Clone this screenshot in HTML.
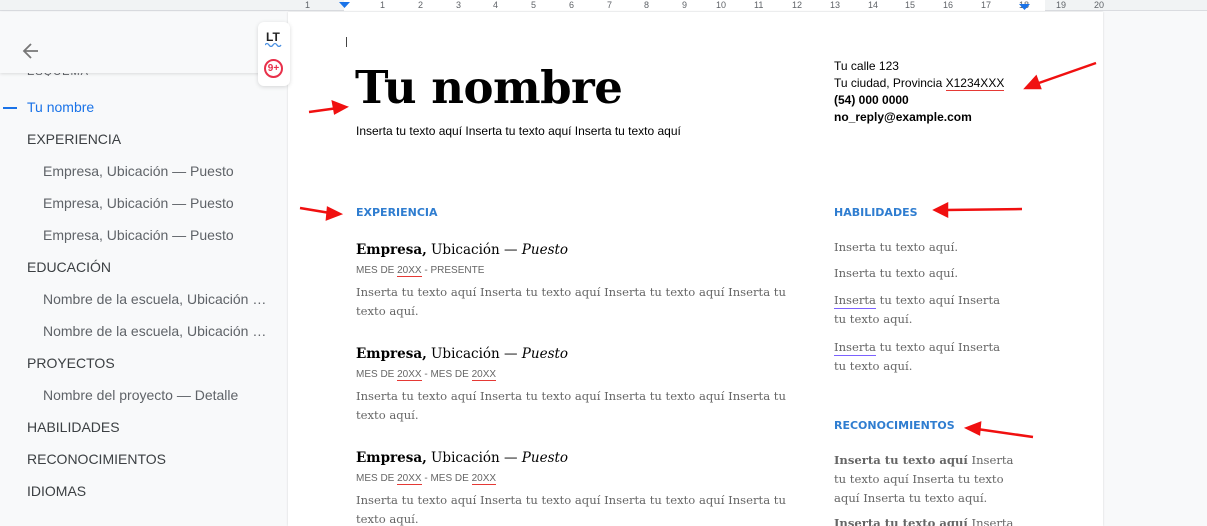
<!DOCTYPE html>
<html><head><meta charset="utf-8"><style>
*{margin:0;padding:0;box-sizing:border-box}
html,body{width:1207px;height:526px;overflow:hidden}
body{background:#f8f9fa;font-family:"Liberation Sans",sans-serif;position:relative}
.a{position:absolute;white-space:nowrap}
.ruler{position:absolute;left:0;top:0;width:1207px;height:11px;background:#f1f3f4;border-bottom:1px solid #dadce0}
.rw{position:absolute;left:344px;top:0;width:701px;height:11px;background:#fff}
.rn{position:absolute;top:0;font-size:9px;color:#5f6368;line-height:11px}
.side{position:absolute;left:0;top:12px;width:288px;height:514px;background:#f8f9fa}
.ol{position:absolute;font-size:14px;color:#3c4043}
.ol2{position:absolute;font-size:14px;color:#5f6368}
.page{position:absolute;left:288px;top:12px;width:815px;height:514px;background:#fff;box-shadow:0 0 2px rgba(0,0,0,.15)}
.serif{font-family:"DejaVu Serif","Liberation Serif",serif}
.h{color:#2f7dd0;font-weight:bold;font-size:11px;font-family:"DejaVu Sans","Liberation Sans",sans-serif}
.job{font-size:13.5px;color:#000}
.date{font-size:10px;color:#666}
.txt{font-size:11.6px;color:#666;line-height:19px;white-space:normal}
.u{display:inline-block;border-bottom:1.5px solid #e53935;line-height:1.1}
.up{display:inline-block;border-bottom:1.5px solid #7b61ff;line-height:1.3}
</style></head><body>
<div class="ruler"><div class="rw"></div>
<span class="rn" style="left:305px">1</span>
<span class="rn" style="left:380px">1</span><span class="rn" style="left:418px">2</span><span class="rn" style="left:456px">3</span><span class="rn" style="left:493px">4</span><span class="rn" style="left:531px">5</span><span class="rn" style="left:569px">6</span><span class="rn" style="left:607px">7</span><span class="rn" style="left:644px">8</span><span class="rn" style="left:682px">9</span><span class="rn" style="left:716px">10</span><span class="rn" style="left:754px">11</span><span class="rn" style="left:792px">12</span><span class="rn" style="left:830px">13</span><span class="rn" style="left:868px">14</span><span class="rn" style="left:905px">15</span><span class="rn" style="left:943px">16</span><span class="rn" style="left:981px">17</span><span class="rn" style="left:1019px">18</span><span class="rn" style="left:1056px">19</span><span class="rn" style="left:1094px">20</span>
<div class="a" style="left:339px;top:2px;width:11px;height:6px;background:#1a73e8;clip-path:polygon(0 0,100% 0,50% 100%)"></div>
<div class="a" style="left:1019px;top:4px;width:11px;height:6px;background:#1a73e8;clip-path:polygon(0 0,100% 0,50% 100%)"></div>
</div>
<div class="side">
<div class="a" style="left:27px;top:54px;font-size:11px;color:#5f6368;letter-spacing:1px;height:10px;overflow:hidden">ESQUEMA</div>
<div class="a" style="left:0;top:0;width:288px;height:61px;background:#f8f9fa;box-shadow:0 1px 3px rgba(0,0,0,.12)"></div>
<svg class="a" style="left:22px;top:30px" width="18" height="18" viewBox="0 0 18 18"><path d="M16 9H3M9 2L2 9l7 7" stroke="#777" stroke-width="1.8" fill="none"/></svg>
<div class="a" style="left:3px;top:95px;width:14px;height:2px;background:#1a73e8"></div>
<div class="ol" style="left:27px;top:87px;color:#1a73e8">Tu nombre</div>
<div class="ol" style="left:27px;top:119px">EXPERIENCIA</div>
<div class="ol2" style="left:43px;top:151px">Empresa, Ubicación — Puesto</div>
<div class="ol2" style="left:43px;top:183px">Empresa, Ubicación — Puesto</div>
<div class="ol2" style="left:43px;top:215px">Empresa, Ubicación — Puesto</div>
<div class="ol" style="left:27px;top:247px">EDUCACIÓN</div>
<div class="ol2" style="left:43px;top:279px">Nombre de la escuela, Ubicación …</div>
<div class="ol2" style="left:43px;top:311px">Nombre de la escuela, Ubicación …</div>
<div class="ol" style="left:27px;top:343px">PROYECTOS</div>
<div class="ol2" style="left:43px;top:375px">Nombre del proyecto — Detalle</div>
<div class="ol" style="left:27px;top:407px">HABILIDADES</div>
<div class="ol" style="left:27px;top:439px">RECONOCIMIENTOS</div>
<div class="ol" style="left:27px;top:471px">IDIOMAS</div>
</div>
<div class="page"></div>
<div class="a" style="left:258px;top:22px;width:32px;height:64px;background:#fff;border-radius:6px;box-shadow:0 1px 4px rgba(0,0,0,.15)"></div>
<div class="a" style="left:266px;top:30px;font-size:12px;font-weight:bold;color:#222">LT</div>
<svg class="a" style="left:265px;top:42px" width="18" height="5"><path d="M0 3q2-3 4 0t4 0 4 0 4 0" stroke="#4a90e2" stroke-width="1.3" fill="none"/></svg>
<div class="a" style="left:264px;top:59px;width:19px;height:19px;border:2px solid #e8304a;border-radius:50%;font-size:10px;font-weight:bold;color:#e8304a;text-align:center;line-height:15px">9+</div>
<div class="a" style="left:346px;top:37px;width:1px;height:10px;background:#444"></div>
<div class="a serif" style="left:355px;top:58px;font-size:45px;font-weight:bold;color:#000;line-height:60px;letter-spacing:-0.5px">Tu nombre</div>
<div class="a" style="left:356px;top:124px;font-size:12px;color:#000">Inserta tu texto aquí Inserta tu texto aquí Inserta tu texto aquí</div>
<div class="a" style="left:834px;top:58px;font-size:12px;color:#000;line-height:17px">Tu calle 123<br>Tu ciudad, Provincia <span class="u">X1234XXX</span><br><b>(54) 000 0000</b><br><b>no_reply@example.com</b></div>
<div class="a h" style="left:356px;top:206px">EXPERIENCIA</div>
<div class="a h" style="left:834px;top:206px">HABILIDADES</div>
<div class="a h" style="left:834px;top:419px">RECONOCIMIENTOS</div>
<div class="a serif job" style="left:356px;top:242px"><b>Empresa,</b> Ubicación — <i>Puesto</i></div>
<div class="a date" style="left:356px;top:265px">MES DE <span class="u">20XX</span> - PRESENTE</div>
<div class="a serif txt" style="left:356px;top:283px;width:440px">Inserta tu texto aquí Inserta tu texto aquí Inserta tu texto aquí Inserta tu texto aquí.</div>
<div class="a serif job" style="left:356px;top:346px"><b>Empresa,</b> Ubicación — <i>Puesto</i></div>
<div class="a date" style="left:356px;top:369px">MES DE <span class="u">20XX</span> - MES DE <span class="u">20XX</span></div>
<div class="a serif txt" style="left:356px;top:387px;width:440px">Inserta tu texto aquí Inserta tu texto aquí Inserta tu texto aquí Inserta tu texto aquí.</div>
<div class="a serif job" style="left:356px;top:450px"><b>Empresa,</b> Ubicación — <i>Puesto</i></div>
<div class="a date" style="left:356px;top:473px">MES DE <span class="u">20XX</span> - MES DE <span class="u">20XX</span></div>
<div class="a serif txt" style="left:356px;top:491px;width:440px">Inserta tu texto aquí Inserta tu texto aquí Inserta tu texto aquí Inserta tu texto aquí.</div>
<div class="a serif txt" style="left:834px;top:238px">Inserta tu texto aquí.</div>
<div class="a serif txt" style="left:834px;top:264px">Inserta tu texto aquí.</div>
<div class="a serif txt" style="left:834px;top:291px;width:175px"><span class="up">Inserta</span> tu texto aquí Inserta tu texto aquí.</div>
<div class="a serif txt" style="left:834px;top:338px;width:175px"><span class="up">Inserta</span> tu texto aquí Inserta tu texto aquí.</div>
<div class="a serif txt" style="left:834px;top:451px;width:180px"><b>Inserta tu texto aquí</b> Inserta tu texto aquí Inserta tu texto aquí Inserta tu texto aquí.</div>
<div class="a serif txt" style="left:834px;top:514px;width:180px"><b>Inserta tu texto aquí</b> Inserta</div>
<svg class="a" style="left:0;top:0" width="1207" height="526">
<g stroke="#f01010" stroke-width="2.5" fill="#f01010">
<line x1="309" y1="112" x2="338" y2="108"/><polygon points="346,107 333,102 335,113"/>
<line x1="1096" y1="63" x2="1036" y2="84"/><polygon points="1026,88 1036,77 1040,88"/>
<line x1="300" y1="208" x2="330" y2="213"/><polygon points="340,214 328,208 327,219"/>
<line x1="1022" y1="209" x2="945" y2="210"/><polygon points="935,210 947,204 947,216"/>
<line x1="1033" y1="437" x2="977" y2="429"/><polygon points="967,428 980,423 979,434"/>
</g></svg>
</body></html>
